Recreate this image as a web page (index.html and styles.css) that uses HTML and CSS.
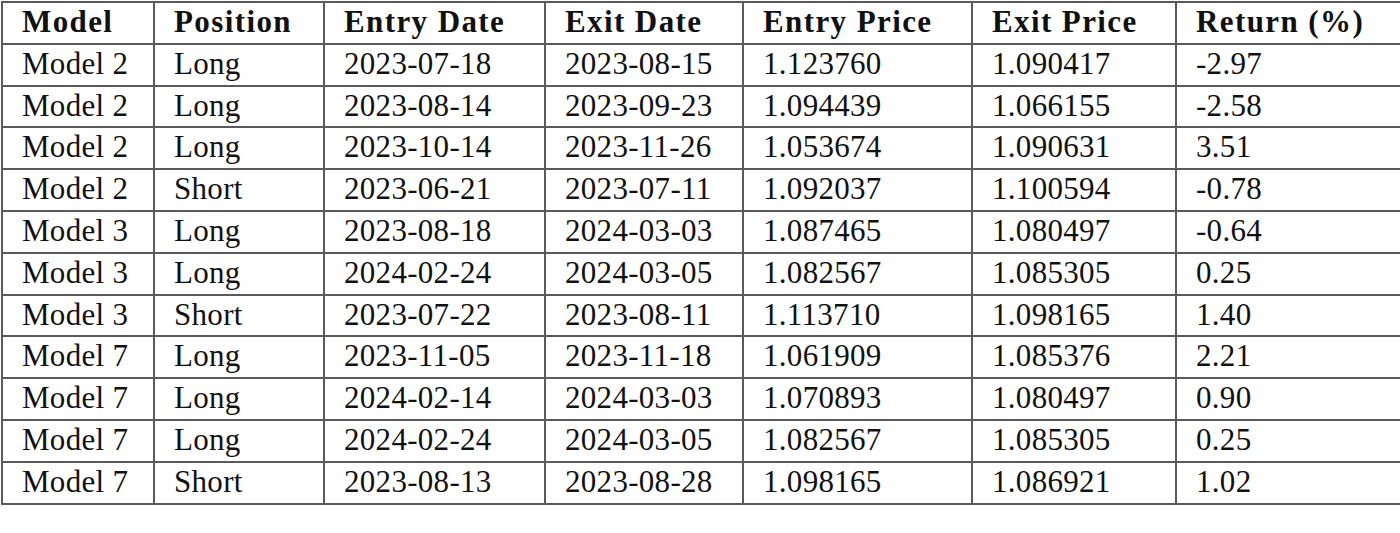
FILE: index.html
```html
<!DOCTYPE html>
<html>
<head>
<meta charset="utf-8">
<link rel="stylesheet" href="styles.css">
</head>
<body>
<table class="trades">
<colgroup>
<col class="c1"><col class="c2"><col class="c3"><col class="c4"><col class="c5"><col class="c6"><col class="c7">
</colgroup>
<thead>
<tr><th>Model</th><th>Position</th><th>Entry Date</th><th>Exit Date</th><th>Entry Price</th><th>Exit Price</th><th>Return (%)</th></tr>
</thead>
<tbody>
<tr><td>Model 2</td><td>Long</td><td>2023-07-18</td><td>2023-08-15</td><td>1.123760</td><td>1.090417</td><td>-2.97</td></tr>
<tr><td>Model 2</td><td>Long</td><td>2023-08-14</td><td>2023-09-23</td><td>1.094439</td><td>1.066155</td><td>-2.58</td></tr>
<tr><td>Model 2</td><td>Long</td><td>2023-10-14</td><td>2023-11-26</td><td>1.053674</td><td>1.090631</td><td>3.51</td></tr>
<tr><td>Model 2</td><td>Short</td><td>2023-06-21</td><td>2023-07-11</td><td>1.092037</td><td>1.100594</td><td>-0.78</td></tr>
<tr><td>Model 3</td><td>Long</td><td>2023-08-18</td><td>2024-03-03</td><td>1.087465</td><td>1.080497</td><td>-0.64</td></tr>
<tr><td>Model 3</td><td>Long</td><td>2024-02-24</td><td>2024-03-05</td><td>1.082567</td><td>1.085305</td><td>0.25</td></tr>
<tr><td>Model 3</td><td>Short</td><td>2023-07-22</td><td>2023-08-11</td><td>1.113710</td><td>1.098165</td><td>1.40</td></tr>
<tr><td>Model 7</td><td>Long</td><td>2023-11-05</td><td>2023-11-18</td><td>1.061909</td><td>1.085376</td><td>2.21</td></tr>
<tr><td>Model 7</td><td>Long</td><td>2024-02-14</td><td>2024-03-03</td><td>1.070893</td><td>1.080497</td><td>0.90</td></tr>
<tr><td>Model 7</td><td>Long</td><td>2024-02-24</td><td>2024-03-05</td><td>1.082567</td><td>1.085305</td><td>0.25</td></tr>
<tr><td>Model 7</td><td>Short</td><td>2023-08-13</td><td>2023-08-28</td><td>1.098165</td><td>1.086921</td><td>1.02</td></tr>
</tbody>
</table>
</body>
</html>
```
FILE: styles.css
```css
html, body {
  margin: 0;
  padding: 0;
  background: #fff;
  overflow: hidden;
}
body {
  width: 1400px;
  height: 533px;
}
.trades {
  margin: 1px 0 0 1px;
  border-collapse: collapse;
  table-layout: fixed;
  width: 1418px;
  font-family: "Liberation Serif", "Times New Roman", serif;
  font-size: 31px;
  color: #111;
}
.c1 { width: 152px; }
.c2 { width: 170px; }
.c3 { width: 221px; }
.c4 { width: 198px; }
.c5 { width: 229px; }
.c6 { width: 204px; }
.c7 { width: 244px; }
.trades th,
.trades td {
  border: 2px solid #5a5a5a;
  padding: 0 0 0 19px;
  height: 39.8px;
  text-align: left;
  vertical-align: top;
  white-space: nowrap;
  overflow: hidden;
  line-height: 37px;
}
.trades td {
  letter-spacing: 0.3px;
}
.trades th {
  font-weight: bold;
  letter-spacing: 1.4px;
}
```
